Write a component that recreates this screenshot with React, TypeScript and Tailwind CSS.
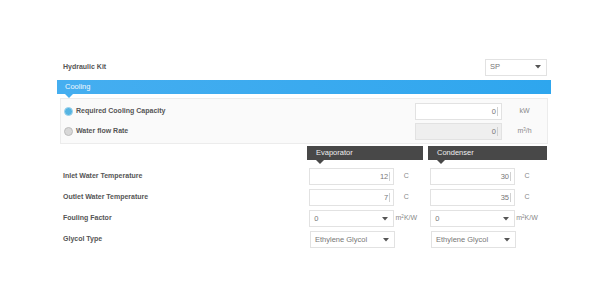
const font = { fontFamily: '"Liberation Sans", Arial, sans-serif' };

function Caret() {
  return (
    <svg width="6" height="4" viewBox="0 0 6 4" className="shrink-0">
      <path d="M0 0 L6 0 L3 3.5 Z" fill="#555" />
    </svg>
  );
}

function NumInput({ value, gray }: { value: string; gray?: boolean }) {
  return (
    <div
      className={`h-[17px] border border-[#e2e2e2] flex items-center justify-end pr-[3px] text-[7.5px] text-[#777] ${
        gray ? 'bg-[#efefef]' : 'bg-white'
      }`}
    >
      <span className="border-r border-[#d0d0d0] pr-[1px] leading-[9px]">{value}</span>
    </div>
  );
}

function Select({ value, w }: { value: string; w: string }) {
  return (
    <div
      className={`${w} h-[17px] border border-[#e2e2e2] bg-white flex items-center justify-between pl-[4px] pr-[5px] text-[7.5px] text-[#777]`}
    >
      <span>{value}</span>
      <Caret />
    </div>
  );
}

function Header({ title, w }: { title: string; w: string }) {
  return (
    <div className={`${w} relative h-[14px] bg-[#484848] text-[#eee] text-[7.5px] flex items-center pl-[9px]`}>
      {title}
      <div className="absolute left-[9px] top-[14px] w-0 h-0 border-l-[4px] border-r-[4px] border-t-[4px] border-l-transparent border-r-transparent border-t-[#484848]" />
    </div>
  );
}

function Label({ children }: { children: string }) {
  return <div className="w-[247px] pl-[6px] text-[7px] font-bold text-[#555]">{children}</div>;
}

function Unit({ children }: { children: React.ReactNode }) {
  return <div className="w-[24px] mr-[12px] text-center text-[7px] text-[#888] whitespace-nowrap">{children}</div>;
}

export default function App() {
  return (
    <div className="w-[602px] h-[300px] bg-white" style={font}>
      <div className="ml-[57px] w-[494px] pt-[58px]">
        {/* Hydraulic kit */}
        <div className="flex items-center justify-between h-[18px] pr-[4px]">
          <div className="pl-[6px] text-[7px] font-bold text-[#555]">Hydraulic Kit</div>
          <Select value="SP" w="w-[62px]" />
        </div>

        {/* Cooling bar */}
        <div className="relative mt-[4px] h-[14px] bg-gradient-to-r from-[#45aef0] to-[#2ea6ee] text-[#f2f8fd] text-[7.5px] flex items-center pl-[8px]">
          Cooling
          <div className="absolute left-[8px] top-[14px] w-0 h-0 border-l-[4px] border-r-[4px] border-t-[4px] border-l-transparent border-r-transparent border-t-[#45aef0]" />
        </div>

        {/* Cooling box */}
        <div className="mx-[3px] mt-[4px] border border-[#ececec] bg-[#fafafa] pt-[4px] pb-[3px] flex flex-col gap-[3px]">
          <div className="flex items-center">
            <div className="flex-1 flex items-center gap-[3px] pl-[3px] text-[7px] font-bold text-[#555]">
              <span className="w-[9px] h-[9px] rounded-full bg-[#55b4e2] border border-[#9fd3ec]" />
              Required Cooling Capacity
            </div>
            <div className="w-[87px]">
              <NumInput value="0" />
            </div>
            <div className="w-[45px] text-center text-[7px] text-[#888]">kW</div>
          </div>
          <div className="flex items-center">
            <div className="flex-1 flex items-center gap-[3px] pl-[3px] text-[7px] font-bold text-[#555]">
              <span className="w-[9px] h-[9px] rounded-full bg-[#d8d8d8] border border-[#bcbcbc]" />
              Water flow Rate
            </div>
            <div className="w-[87px]">
              <NumInput value="0" gray />
            </div>
            <div className="w-[45px] text-center text-[7px] text-[#888]">
              m<sup className="text-[4.5px]">3</sup>/h
            </div>
          </div>
        </div>

        {/* Evaporator / Condenser headers */}
        <div className="flex mt-[2px]">
          <div className="w-[250px]" />
          <Header title="Evaporator" w="w-[116px]" />
          <div className="w-[5px]" />
          <Header title="Condenser" w="w-[119px]" />
        </div>

        <div className="mt-[8px] flex flex-col gap-[4px]">
          {[
            ['Inlet Water Temperature', '12', '30'],
            ['Outlet Water Temperature', '7', '35'],
          ].map(([label, a, b]) => (
            <div key={label} className="flex items-center">
              <Label>{label}</Label>
              <div className="w-[85px] ml-[6px]">
                <NumInput value={a} />
              </div>
              <Unit>C</Unit>
              <div className="w-[85px]">
                <NumInput value={b} />
              </div>
              <Unit>C</Unit>
            </div>
          ))}
          <div className="flex items-center">
            <Label>Fouling Factor</Label>
            <div className="ml-[6px]">
              <Select value="0" w="w-[85px]" />
            </div>
            <Unit>
              m<sup className="text-[4.5px]">2</sup>K/W
            </Unit>
            <Select value="0" w="w-[85px]" />
            <Unit>
              m<sup className="text-[4.5px]">2</sup>K/W
            </Unit>
          </div>
          <div className="flex items-center">
            <Label>Glycol Type</Label>
            <div className="ml-[6px]">
              <Select value="Ethylene Glycol" w="w-[85px]" />
            </div>
            <div className="w-[36px]" />
            <Select value="Ethylene Glycol" w="w-[85px]" />
          </div>
        </div>
      </div>
    </div>
  );
}
